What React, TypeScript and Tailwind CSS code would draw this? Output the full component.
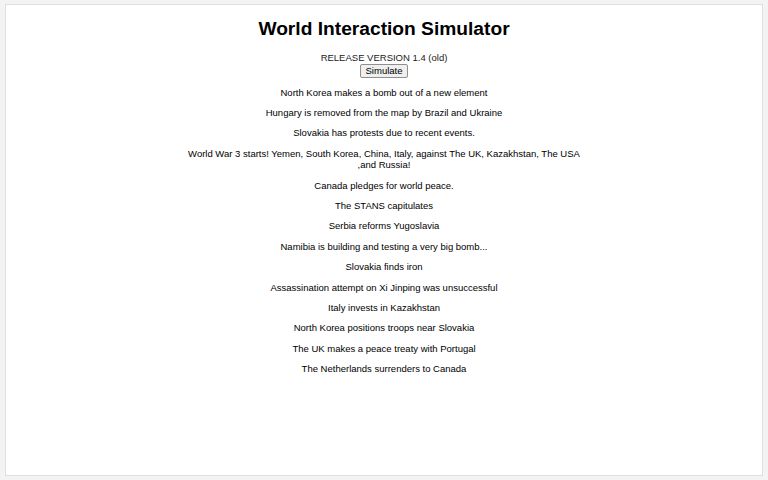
import React from "react";

const events = [
  "North Korea makes a bomb out of a new element",
  "Hungary is removed from the map by Brazil and Ukraine",
  "Slovakia has protests due to recent events.",
  "World War 3 starts! Yemen, South Korea, China, Italy, against The UK, Kazakhstan, The USA ,and Russia!",
  "Canada pledges for world peace.",
  "The STANS capitulates",
  "Serbia reforms Yugoslavia",
  "Namibia is building and testing a very big bomb...",
  "Slovakia finds iron",
  "Assassination attempt on Xi Jinping was unsuccessful",
  "Italy invests in Kazakhstan",
  "North Korea positions troops near Slovakia",
  "The UK makes a peace treaty with Portugal",
  "The Netherlands surrenders to Canada",
];

export default function App() {
  return (
    <div
      className="h-[480px] w-[768px] bg-[#f3f3f3] pt-[4px] pl-[5px] pr-[5px]"
      style={{ fontFamily: '"Liberation Sans", Arial, sans-serif' }}
    >
      <div className="h-[472px] bg-white border border-[#e0e0e0] flex flex-col items-center text-black">
        <h1 className="mt-[13px] text-[19.2px] leading-[22px] font-bold">World Interaction Simulator</h1>
        <div className="mt-[11.5px] text-[9.5px] leading-[11.5px] text-[#222]">RELEASE VERSION 1.4 (old)</div>
        <button className="mt-[0.5px] h-[14px] px-[5px] text-[9.5px] leading-[12px] bg-[#efefef] border border-[#8f8f8f] rounded-[2px] text-black">
          Simulate
        </button>
        <div className="mt-[9px] w-[400px] flex flex-col gap-[9px] text-[9.5px] leading-[11.4px] text-center">
          {events.map((e) => (
            <p key={e}>{e}</p>
          ))}
        </div>
      </div>
    </div>
  );
}
